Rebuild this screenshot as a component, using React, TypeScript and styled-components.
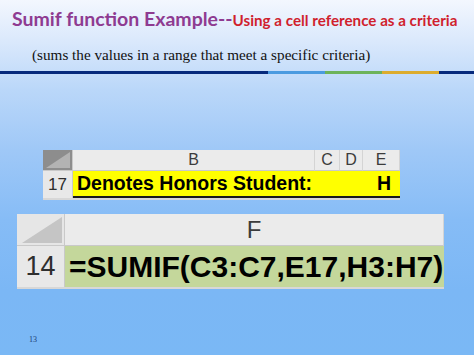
import React from 'react';
import styled, { createGlobalStyle } from 'styled-components';

const GlobalStyle = createGlobalStyle`
  html, body {
    margin: 0;
    padding: 0;
    width: 474px;
    height: 355px;
    overflow: hidden;
  }
`;

const Slide = styled.div`
  width: 474px;
  height: 355px;
  display: flex;
  flex-direction: column;
  background: linear-gradient(180deg, #f3f7fe 0px, #dbe9fc 40px, #bad7f9 90px, #9fc8f7 150px, #86bcf6 220px, #7bb7f5 290px, #7ab8f5 355px);
  font-family: 'Liberation Sans', Arial, sans-serif;
`;

const Title = styled.div`
  display: flex;
  align-items: baseline;
  padding: 7px 0 0 12px;
  height: 25px;
  font-family: Lato, 'Open Sans', sans-serif;
  font-weight: 700;
  white-space: nowrap;
`;

const TitleMain = styled.span`
  color: #8e3b91;
  font-size: 19.5px;
`;

const TitleSub = styled.span`
  color: #d01f2e;
  font-size: 15.2px;
`;

const Subtitle = styled.div`
  padding: 14px 0 0 32px;
  height: 20px;
  font-family: 'Liberation Serif', 'Times New Roman', serif;
  font-size: 15.2px;
  color: #111;
  white-space: nowrap;
`;

const Rule = styled.div`
  display: flex;
  height: 3px;
  margin-top: 5px;
`;

const RuleSeg = styled.div<{ $w: number; $c: string }>`
  width: ${p => p.$w}px;
  flex: ${p => (p.$w ? '0 0 auto' : '1')};
  background: ${p => p.$c};
`;

const Sheet = styled.div<{ $cols: string; $rows: string; $left: number; $top: number }>`
  display: grid;
  grid-template-columns: ${p => p.$cols};
  grid-template-rows: ${p => p.$rows};
  margin-left: ${p => p.$left}px;
  margin-top: ${p => p.$top}px;
  align-self: flex-start;
  background: #e9e9e9;
  border-bottom: 2px solid #d7d7d7;
`;

const Corner = styled.div<{ $dark?: boolean }>`
  background: ${p => (p.$dark ? '#8d8d8d' : '#e6e6e6')};
  border-right: 1px solid #c9c9c9;
  border-bottom: 1px solid #c9c9c9;
  position: relative;
  overflow: hidden;

  &::after {
    content: '';
    position: absolute;
    right: 2px;
    bottom: 2px;
    width: 0;
    height: 0;
    border-style: solid;
    border-width: 0 0 ${p => (p.$dark ? '16px 24px' : '26px 40px')};
    border-color: transparent transparent ${p => (p.$dark ? '#b3b3b3' : '#c5c5c5')} transparent;
  }
`;

const ColHead = styled.div<{ $size: number }>`
  display: flex;
  align-items: center;
  justify-content: center;
  font-size: ${p => p.$size}px;
  color: #3c3c3c;
  border-right: 1px solid #d4d4d4;
  border-bottom: 1px solid #c9c9c9;
  background: #ebebeb;
`;

const RowHead = styled.div<{ $size: number }>`
  display: flex;
  align-items: center;
  justify-content: center;
  font-size: ${p => p.$size}px;
  color: #2e2e2e;
  border-right: 1px solid #c9c9c9;
  background: #e8e8e8;
`;

const Cell = styled.div<{ $bg: string; $size: number; $span?: number; $line?: boolean; $end?: boolean }>`
  grid-column: span ${p => p.$span || 1};
  display: flex;
  align-items: center;
  justify-content: ${p => (p.$end ? 'flex-end' : 'flex-start')};
  padding: 0 ${p => (p.$end ? '9px' : '0')} 0 4px;
  background: ${p => p.$bg};
  font-size: ${p => p.$size}px;
  font-weight: 700;
  color: #000;
  white-space: nowrap;
  border-bottom: ${p => (p.$line ? '2px solid #1a1a1a' : 'none')};
`;

const PageNumber = styled.div`
  margin-top: auto;
  padding: 0 0 11px 29px;
  font-family: 'Liberation Serif', 'Times New Roman', serif;
  font-size: 8px;
  color: #1d3c74;
`;

export default function App() {
  return (
    <>
      <GlobalStyle />
      <Slide>
        <Title>
          <TitleMain>Sumif function Example--</TitleMain>
          <TitleSub>Using a cell reference as a criteria</TitleSub>
        </Title>
        <Subtitle>(sums the values in a range that meet a specific criteria)</Subtitle>
        <Rule>
          <RuleSeg $w={268} $c="#062a7c" />
          <RuleSeg $w={57} $c="#4b9be0" />
          <RuleSeg $w={57} $c="#6db35a" />
          <RuleSeg $w={57} $c="#dcac2e" />
          <RuleSeg $w={0} $c="#062a7c" />
        </Rule>

        <Sheet $cols="30px 242px 25px 23px 37px" $rows="21px 27px" $left={43} $top={76}>
          <Corner $dark />
          <ColHead $size={16}>B</ColHead>
          <ColHead $size={16}>C</ColHead>
          <ColHead $size={16}>D</ColHead>
          <ColHead $size={16}>E</ColHead>
          <RowHead $size={17}>17</RowHead>
          <Cell $bg="#ffff00" $size={19.5} $span={3} $line>Denotes Honors Student:</Cell>
          <Cell $bg="#ffff00" $size={19.5} $line $end>H</Cell>
        </Sheet>

        <Sheet $cols="48px 379px" $rows="32px 41px" $left={17} $top={14}>
          <Corner />
          <ColHead $size={24}>F</ColHead>
          <RowHead $size={27}>14</RowHead>
          <Cell $bg="#c4d79b" $size={30}>=SUMIF(C3:C7,E17,H3:H7)</Cell>
        </Sheet>

        <PageNumber>13</PageNumber>
      </Slide>
    </>
  );
}
